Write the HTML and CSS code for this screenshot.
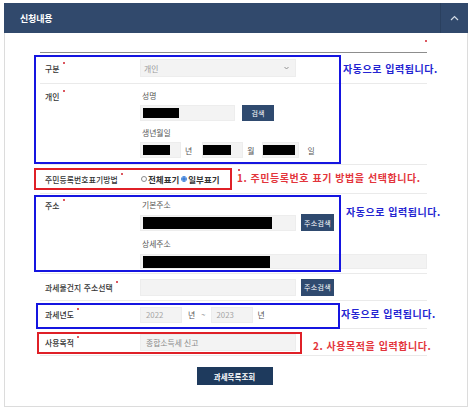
FILE: index.html
```html
<!DOCTYPE html>
<html lang="ko">
<head>
<meta charset="utf-8">
<title>신청내용</title>
<link rel="stylesheet" href="styles.css">
</head>
<body>
<div class="page">
  <section class="panel">
    <header class="panel-head">
      <h2 class="panel-title">신청내용</h2>
      <button class="toggle" type="button" aria-label="접기">
        <svg width="9" height="6" viewBox="0 0 9 6"><polyline points="1,5 4.5,1.5 8,5" fill="none" stroke="#d3dae4" stroke-width="1.2"/></svg>
      </button>
    </header>
    <div class="panel-body">
      <div class="req-note"><span class="dot"></span></div>
      <div class="form">
        <div class="row row-1">
          <div class="label">구분<span class="req"></span></div>
          <div class="value">
            <div class="field select w156">
              <span>개인</span>
              <svg width="5" height="4" viewBox="0 0 5 4"><polyline points="0.5,1 2.5,3 4.5,1" fill="none" stroke="#888" stroke-width="0.9"/></svg>
            </div>
          </div>
        </div>
        <div class="row row-2">
          <div class="label top">개인<span class="req"></span></div>
          <div class="value stack">
            <div class="sub">성명</div>
            <div class="line gap-name">
              <div class="field w95"><span class="mask m36"></span></div>
              <button class="btn btn-search" type="button">검색</button>
            </div>
            <div class="sub sub-2">생년월일</div>
            <div class="line birth">
              <div class="field w41"><span class="mask m27"></span></div>
              <span class="unit u-year">년</span>
              <div class="field w41 tight"><span class="mask m28"></span></div>
              <span class="unit u-month">월</span>
              <div class="field w37 tight"><span class="mask m32"></span></div>
              <span class="unit u-day">일</span>
            </div>
          </div>
        </div>
        <div class="row row-3">
          <div class="label">주민등록번호표기방법<span class="req"></span></div>
          <div class="value">
            <label class="radio"><input type="radio" name="rrn">전체표기</label>
            <label class="radio"><input type="radio" name="rrn" checked>일부표기</label>
          </div>
        </div>
        <div class="row row-4">
          <div class="label top2">주소<span class="req"></span></div>
          <div class="value stack">
            <div class="sub">기본주소</div>
            <div class="line gap-addr">
              <div class="field w156"><span class="mask m129 tall"></span></div>
              <button class="btn btn-addr" type="button">주소검색</button>
            </div>
            <div class="sub sub-4">상세주소</div>
            <div class="line">
              <div class="field w287 h15"><span class="mask m127 tall"></span></div>
            </div>
          </div>
        </div>
        <div class="row row-5">
          <div class="label">과세물건지 주소선택<span class="req"></span></div>
          <div class="value line gap-addr">
            <div class="field w156 h17"></div>
            <button class="btn btn-addr" type="button">주소검색</button>
          </div>
        </div>
        <div class="row row-6">
          <div class="label">과세년도<span class="req"></span></div>
          <div class="value line">
            <div class="field w42 num">2022</div>
            <span class="unit u-y1">년</span>
            <span class="unit tilde">~</span>
            <div class="field w42 num">2023</div>
            <span class="unit u-y2">년</span>
          </div>
        </div>
        <div class="row row-7">
          <div class="label">사용목적<span class="req"></span></div>
          <div class="value">
            <div class="field w156 h17 txt">종합소득세 신고</div>
          </div>
        </div>

        <div class="mark blue b1"></div>
        <div class="mark red r1"></div>
        <div class="mark blue b2"></div>
        <div class="mark blue b3"></div>
        <div class="mark red r2"></div>
        <span class="mark-dot"></span>
        <p class="note blue-t n1">자동으로 입력됩니다.</p>
        <p class="note red-t n2">1. 주민등록번호 표기 방법을 선택합니다.</p>
        <p class="note blue-t n3">자동으로 입력됩니다.</p>
        <p class="note blue-t n4">자동으로 입력됩니다.</p>
        <p class="note red-t n5">2. 사용목적을 입력합니다.</p>
      </div>
      <div class="actions">
        <button class="btn btn-main" type="button">과세목록조회</button>
      </div>
    </div>
  </section>
</div>
</body>
</html>
```
FILE: styles.css
```css
* { box-sizing: border-box; margin: 0; padding: 0; }
body {
  margin: 0;
  background: #fff;
  font-family: "Noto Sans CJK KR", "Noto Sans", sans-serif;
  color: #333;
}
.page { padding: 3px 6px 0 4px; }
.panel { width: 464px; }

.panel-head {
  height: 30px;
  background: #31496c;
  display: flex;
  align-items: center;
}
.panel-title {
  flex: 1;
  padding-left: 16px;
  font-size: 9px;
  font-weight: 700;
  color: #fff;
  letter-spacing: -0.2px;
}
.toggle {
  width: 28px;
  height: 30px;
  border: 0;
  border-left: 1px solid #2a405f;
  background: transparent;
  display: flex;
  align-items: center;
  justify-content: center;
}

.panel-body {
  border: 1px solid #dcdcdc;
  border-top: 0;
  padding: 0 40px 21px 35px;
  background: #fff;
}
.req-note {
  height: 19px;
  display: flex;
  justify-content: flex-end;
  padding-top: 7px;
}
.dot, .mark-dot {
  display: block;
  width: 2px;
  height: 2px;
  border-radius: 50%;
  background: #d01f2b;
}

.form {
  position: relative;
  border-top: 1px solid #8d8d8d;
}
.row {
  display: grid;
  grid-template-columns: 100px 1fr;
  border-bottom: 1px solid #eaeaea;
  align-items: center;
}
.row-1 { height: 31px; }
.row-2 { height: 81px; align-items: start; }
.row-3 { height: 29px; }
.row-4 { height: 80px; align-items: start; }
.row-5 { height: 27px; }
.row-6 { height: 28px; }
.row-7 { height: 27px; }

.label {
  padding-left: 5px;
  font-size: 7.8px;
  line-height: 12px;
  font-weight: 500;
  color: #333;
  white-space: nowrap;
  letter-spacing: 0.1px;
}
.label.top { padding-top: 6px; }
.label.top2 { padding-top: 5px; }
.req {
  display: inline-block;
  width: 2px;
  height: 2px;
  border-radius: 50%;
  background: #d01f2b;
  margin-left: 3px;
  vertical-align: 8px;
}

.value { display: flex; align-items: center; }
.value.stack { display: block; }
.row-2 .value.stack { padding-top: 6px; }
.row-4 .value.stack { padding-top: 5px; }
.sub {
  font-size: 7.8px;
  line-height: 12px;
  color: #555;
  padding-left: 2px;
}
.row-2 .sub { margin-bottom: 3px; }
.row-2 .sub-2 { margin-top: 6px; }
.row-4 .sub { margin-bottom: 3px; }
.row-4 .sub-4 { margin-top: 7px; margin-bottom: 4px; }
.line { display: flex; align-items: center; }
.gap-name { gap: 7px; }
.gap-addr { gap: 5px; }

.field {
  height: 16px;
  background: #f3f3f3;
  border: 1px solid #ededed;
  display: flex;
  align-items: center;
  padding-left: 2px;
  font-size: 7.8px;
  color: #9a9a9a;
  flex: none;
}
.field.select {
  height: 18px;
  justify-content: space-between;
  padding: 0 6px 0 3px;
}
.field.tight { padding-left: 0; }
.h15 { height: 15px; }
.h17 { height: 17px; }
.w156 { width: 156px; }
.w95 { width: 95px; }
.w41 { width: 41px; }
.w37 { width: 37px; }
.w42 { width: 42px; }
.w287 { width: 287px; }
.num { padding-left: 5px; color: #a5a5a5; }
.txt { padding-left: 5px; color: #8a8a8a; }

.mask { display: block; height: 10px; background: #000; }
.mask.tall { height: 12px; }
.m36 { width: 36px; }
.m27 { width: 27px; }
.m28 { width: 28px; }
.m32 { width: 32px; }
.m129 { width: 129px; }
.m127 { width: 127px; }

.unit { font-size: 7.8px; color: #555; flex: none; }
.u-year { margin: 0 10px 0 4px; }
.u-month { margin: 0 8px 0 4px; }
.u-day { margin-left: 8px; }
.u-y1 { margin: 0 6px 0 6px; }
.tilde { margin-right: 5px; color: #666; }
.u-y2 { margin-left: 5px; }

.radio {
  display: inline-flex;
  align-items: center;
  font-size: 8.5px;
  font-weight: 700;
  color: #333;
  margin-right: 1px;
}
.radio input {
  appearance: none;
  width: 6px;
  height: 6px;
  border: 1px solid #8a8a8a;
  border-radius: 50%;
  background: #fff;
  margin: 0 1px 0 1px;
}
.radio input:checked {
  border-color: #3d7fd8;
  background: radial-gradient(circle, #3d7fd8 55%, #fff 60%);
}

.btn {
  height: 16px;
  border: 0;
  background: #2f4a6f;
  color: #fff;
  font-family: inherit;
  font-size: 7px;
  flex: none;
}
.btn-search { width: 32px; }
.btn-addr { width: 33px; height: 17px; letter-spacing: 0.3px; }
.actions {
  margin-top: 11px;
  display: flex;
  justify-content: center;
  padding-left: 2px;
}
.btn-main {
  width: 76px;
  height: 18px;
  background: #1e3a5d;
  font-size: 7.5px;
  font-weight: 700;
}

.mark { position: absolute; border: 2px solid; }
.blue { border-color: #1515e0; }
.red { border-color: #df2027; }
.b1 { left: -6px; top: 2px; width: 307px; height: 109px; }
.r1 { left: -6px; top: 115px; width: 198px; height: 22px; }
.b2 { left: -6px; top: 142px; width: 307px; height: 77px; }
.b3 { left: -4px; top: 250px; width: 304px; height: 26px; }
.r2 { left: -3px; top: 279px; width: 265px; height: 22px; }
.mark-dot { position: absolute; left: 198px; top: 116px; }

.note {
  position: absolute;
  font-size: 10px;
  line-height: 12px;
  font-weight: 700;
  white-space: nowrap;
  letter-spacing: 0.55px;
}
.blue-t { color: #2424d2; }
.red-t { color: #e3343b; }
.n1 { left: 303px; top: 10px; }
.n2 { left: 197px; top: 119px; }
.n3 { left: 306px; top: 153px; }
.n4 { left: 301px; top: 255px; }
.n5 { left: 273px; top: 287px; }
```
